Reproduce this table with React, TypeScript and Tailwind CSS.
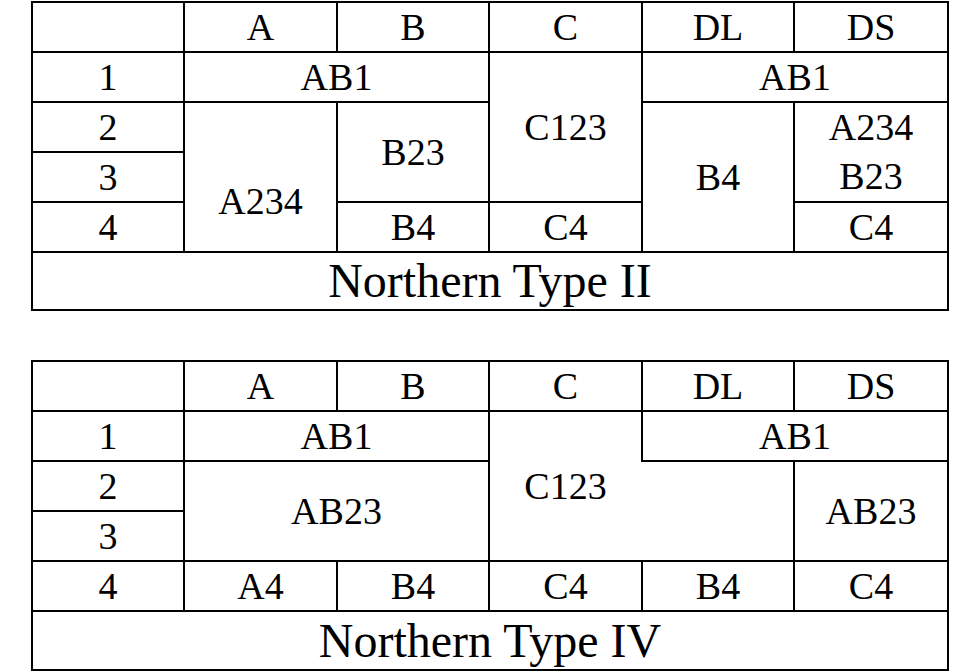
import React from "react";

const cell =
  "flex items-center justify-center border-r-2 border-b-2 border-black bg-white";

function Header() {
  return (
    <>
      <div className={`${cell} col-start-1 row-start-1`}></div>
      <div className={`${cell} col-start-2 row-start-1`}>A</div>
      <div className={`${cell} col-start-3 row-start-1`}>B</div>
      <div className={`${cell} col-start-4 row-start-1`}>C</div>
      <div className={`${cell} col-start-5 row-start-1`}>DL</div>
      <div className={`${cell} col-start-6 row-start-1`}>DS</div>
      <div className={`${cell} col-start-1 row-start-2`}>1</div>
      <div className={`${cell} col-start-1 row-start-3`}>2</div>
      <div className={`${cell} col-start-1 row-start-4`}>3</div>
      <div className={`${cell} col-start-1 row-start-5`}>4</div>
    </>
  );
}

export default function App() {
  return (
    <div
      className="w-[963px] h-[672px] bg-white text-black overflow-hidden"
      style={{ fontFamily: '"Liberation Serif", "Times New Roman", serif' }}
    >
      {/* Table 1 */}
      <div className="ml-[31px] mt-[1px] w-[918px] grid grid-cols-[152px_153px_152px_153px_152px_154px] grid-rows-[50px_50px_50px_50px_50px_58px] border-l-2 border-t-2 border-black text-[38px]">
        <Header />
        <div className={`${cell} col-start-2 col-span-2 row-start-2`}>AB1</div>
        <div className={`${cell} col-start-4 row-start-2 row-span-3`}>C123</div>
        <div className={`${cell} col-start-5 col-span-2 row-start-2`}>AB1</div>
        <div className={`${cell} col-start-2 row-start-3 row-span-3 pt-[48px]`}>A234</div>
        <div className={`${cell} col-start-3 row-start-3 row-span-2`}>B23</div>
        <div className={`${cell} col-start-3 row-start-5`}>B4</div>
        <div className={`${cell} col-start-4 row-start-5`}>C4</div>
        <div className={`${cell} col-start-5 row-start-3 row-span-3`}>B4</div>
        <div className={`${cell} col-start-6 row-start-3 row-span-2 flex-col leading-[49px]`}>
          <span>A234</span>
          <span>B23</span>
        </div>
        <div className={`${cell} col-start-6 row-start-5`}>C4</div>
        <div className={`${cell} col-start-1 col-span-6 row-start-6 text-[48px]`}>
          Northern Type II
        </div>
      </div>

      {/* Table 2 */}
      <div className="ml-[31px] mt-[49px] w-[918px] grid grid-cols-[152px_153px_152px_153px_152px_154px] grid-rows-[50px_50px_50px_50px_50px_59px] border-l-2 border-t-2 border-black text-[38px]">
        <Header />
        <div className={`${cell} col-start-2 col-span-2 row-start-2`}>AB1</div>
        <div className={`${cell} col-start-4 row-start-2 row-span-3`}>C123</div>
        <div className={`${cell} col-start-5 col-span-2 row-start-2`}>AB1</div>
        <div className={`${cell} col-start-5 row-start-3 row-span-2 -ml-[2px] relative`}></div>
        <div className={`${cell} col-start-2 col-span-2 row-start-3 row-span-2`}>AB23</div>
        <div className={`${cell} col-start-6 row-start-3 row-span-2`}>AB23</div>
        <div className={`${cell} col-start-2 row-start-5`}>A4</div>
        <div className={`${cell} col-start-3 row-start-5`}>B4</div>
        <div className={`${cell} col-start-4 row-start-5`}>C4</div>
        <div className={`${cell} col-start-5 row-start-5`}>B4</div>
        <div className={`${cell} col-start-6 row-start-5`}>C4</div>
        <div className={`${cell} col-start-1 col-span-6 row-start-6 text-[48px]`}>
          Northern Type IV
        </div>
      </div>
    </div>
  );
}
